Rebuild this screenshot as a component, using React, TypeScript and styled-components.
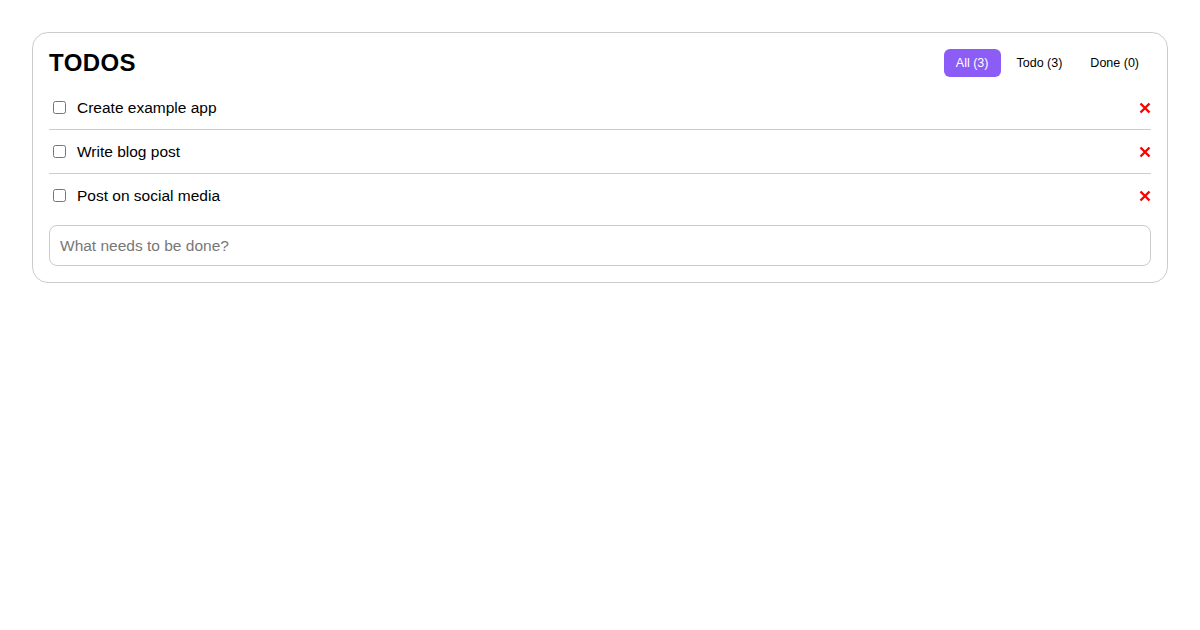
import React, { useState } from "react";
import styled, { createGlobalStyle } from "styled-components";

const Global = createGlobalStyle`
  html, body { margin: 0; padding: 0; background: #fff; }
  body { font-family: "Liberation Sans", Arial, sans-serif; color: #000; }
  * { box-sizing: border-box; }
`;

const Page = styled.div`
  padding: 32px;
`;

const Card = styled.div`
  border: 1px solid #ccc;
  border-radius: 16px;
  padding: 16px;
  display: flex;
  flex-direction: column;
`;

const Header = styled.div`
  display: flex;
  align-items: center;
  justify-content: space-between;
  height: 28px;
  margin-bottom: 9px;
`;

const Title = styled.h1`
  margin: 0;
  font-size: 24px;
  font-weight: 700;
  line-height: 28px;
  letter-spacing: 0.4px;
`;

const Filters = styled.div`
  display: flex;
  gap: 4px;
`;

const FilterButton = styled.button<{ $active?: boolean }>`
  height: 28px;
  padding: 0 12px;
  border: none;
  border-radius: 6px;
  font-family: "Liberation Sans", Arial, sans-serif;
  font-size: 12.5px;
  cursor: pointer;
  background: ${(p) => (p.$active ? "#8b5cf6" : "transparent")};
  color: ${(p) => (p.$active ? "#fff" : "#000")};
`;

const List = styled.ul`
  list-style: none;
  margin: 0;
  padding: 0;
`;

const Row = styled.li`
  display: flex;
  align-items: center;
  height: 44px;
  border-bottom: 1px solid #ccc;
  &:last-child { border-bottom: none; height: 43px; }
`;

const Check = styled.input`
  margin: 3px 3px 3px 4px;
  width: 13px;
  height: 13px;
`;

const Label = styled.span`
  margin-left: 8px;
  flex: 1;
  font-size: 15.5px;
`;

const Remove = styled.button`
  border: none;
  background: none;
  padding: 0;
  width: 12px;
  height: 12px;
  display: flex;
  align-items: center;
  justify-content: center;
  cursor: pointer;
`;

const Input = styled.input`
  margin-top: 8px;
  width: 100%;
  height: 41px;
  border: 1px solid #ccc;
  border-radius: 8px;
  padding: 0 10px;
  font-family: "Liberation Sans", Arial, sans-serif;
  font-size: 15.5px;
  outline: none;
  &::placeholder { color: #777; }
`;

const todos = ["Create example app", "Write blog post", "Post on social media"];

export default function App() {
  const [filter, setFilter] = useState("all");
  return (
    <>
      <Global />
      <Page>
        <Card>
          <Header>
            <Title>TODOS</Title>
            <Filters>
              <FilterButton $active={filter === "all"} onClick={() => setFilter("all")}>All (3)</FilterButton>
              <FilterButton $active={filter === "todo"} onClick={() => setFilter("todo")}>Todo (3)</FilterButton>
              <FilterButton $active={filter === "done"} onClick={() => setFilter("done")}>Done (0)</FilterButton>
            </Filters>
          </Header>
          <List>
            {todos.map((t) => (
              <Row key={t}>
                <Check type="checkbox" />
                <Label>{t}</Label>
                <Remove aria-label="Delete">
                  <svg width="12" height="12" viewBox="0 0 12 12">
                    <path d="M1.5 1.5 L10.5 10.5 M10.5 1.5 L1.5 10.5" stroke="#f00" strokeWidth="2.4" />
                  </svg>
                </Remove>
              </Row>
            ))}
          </List>
          <Input placeholder="What needs to be done?" />
        </Card>
      </Page>
    </>
  );
}
